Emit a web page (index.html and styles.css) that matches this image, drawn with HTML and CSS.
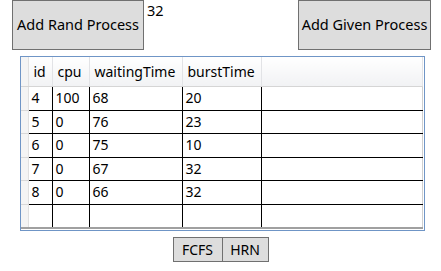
FILE: index.html
```html
<!DOCTYPE html>
<html>
<head>
<meta charset="utf-8">
<link rel="stylesheet" href="styles.css">
</head>
<body>
<div class="top">
  <button class="btn big">Add Rand Process</button>
  <div class="input">32</div>
  <button class="btn big right">Add Given Process</button>
</div>
<div class="grid">
  <table>
    <colgroup>
      <col class="c-rh"><col class="c-id"><col class="c-cpu"><col class="c-wt"><col class="c-bt"><col>
    </colgroup>
    <thead>
      <tr><th class="rh"></th><th>id</th><th>cpu</th><th>waitingTime</th><th>burstTime</th><th class="fill"></th></tr>
    </thead>
    <tbody>
      <tr><td class="rh"></td><td>4</td><td>100</td><td>68</td><td>20</td><td></td></tr>
      <tr><td class="rh"></td><td>5</td><td>0</td><td>76</td><td>23</td><td></td></tr>
      <tr><td class="rh"></td><td>6</td><td>0</td><td>75</td><td>10</td><td></td></tr>
      <tr><td class="rh"></td><td>7</td><td>0</td><td>67</td><td>32</td><td></td></tr>
      <tr><td class="rh"></td><td>8</td><td>0</td><td>66</td><td>32</td><td></td></tr>
      <tr class="last"><td class="rh"></td><td></td><td></td><td></td><td></td><td></td></tr>
    </tbody>
  </table>
</div>
<div class="bottom">
  <button class="btn small fcfs">FCFS</button><button class="btn small hrn">HRN</button>
</div>
</body>
</html>
```
FILE: styles.css
```css
html, body {
  margin: 0;
  padding: 0;
  background: #ffffff;
  font-family: "Noto Sans", "Open Sans", sans-serif;
  color: #000;
}
.top {
  display: flex;
  align-items: flex-start;
  margin-left: 12px;
  height: 50px;
}
.btn {
  font-family: inherit;
  background: #dddddd;
  border: 1px solid #707070;
  color: #000;
  padding: 0;
  margin: 0;
}
.big {
  width: 132px;
  height: 50px;
  font-size: 14.5px;
  padding-bottom: 2px;
}
.big.right {
  width: 133px;
}
.input {
  width: 154px;
  height: 50px;
  box-sizing: border-box;
  padding: 0 0 0 3px;
  font-size: 14.5px;
  line-height: 20px;
  background: #fff;
}
.grid {
  margin: 6px 0 0 20px;
  width: 405px;
  height: 175px;
  box-sizing: border-box;
  border: 1px solid #6f95c6;
  overflow: hidden;
}
table {
  border-collapse: collapse;
  width: 402px;
  table-layout: fixed;
  font-size: 14px;
}
.c-rh { width: 7px; }
.c-id { width: 24px; }
.c-cpu { width: 37px; }
.c-wt { width: 93px; }
.c-bt { width: 79px; }
th {
  height: 29px;
  padding: 0 0 0 5px;
  font-weight: normal;
  text-align: left;
  background: linear-gradient(#ffffff, #f1f2f4);
  border-right: 1px solid #e2e3e6;
  border-bottom: 1px solid #d5d5d5;
  white-space: nowrap;
  overflow: hidden;
}
th.rh, td.rh {
  padding: 0;
  background: #f4f4f4;
  border-right: 1px solid #e0e0e0;
}
td {
  height: 22.5px;
  padding: 0 0 0 3px;
  border-right: 1px solid #000;
  border-bottom: 1px solid #000;
  white-space: nowrap;
  overflow: hidden;
  line-height: 20px;
}
td.rh {
  border-bottom: 1px solid #d8d8d8;
}
tr.last td {
  border-bottom: 2px solid #a0a0a0;
}
td:last-child {
  border-right: 1px solid #d0d0d0;
}
.bottom {
  display: flex;
  justify-content: center;
  margin-top: 6px;
  padding-left: 0;
}
.small {
  font-size: 14px;
  height: 25px;
  padding: 0;
}
.fcfs {
  width: 50px;
  margin-left: 0;
}
.hrn {
  width: 46px;
  border-left: none;
}
```
